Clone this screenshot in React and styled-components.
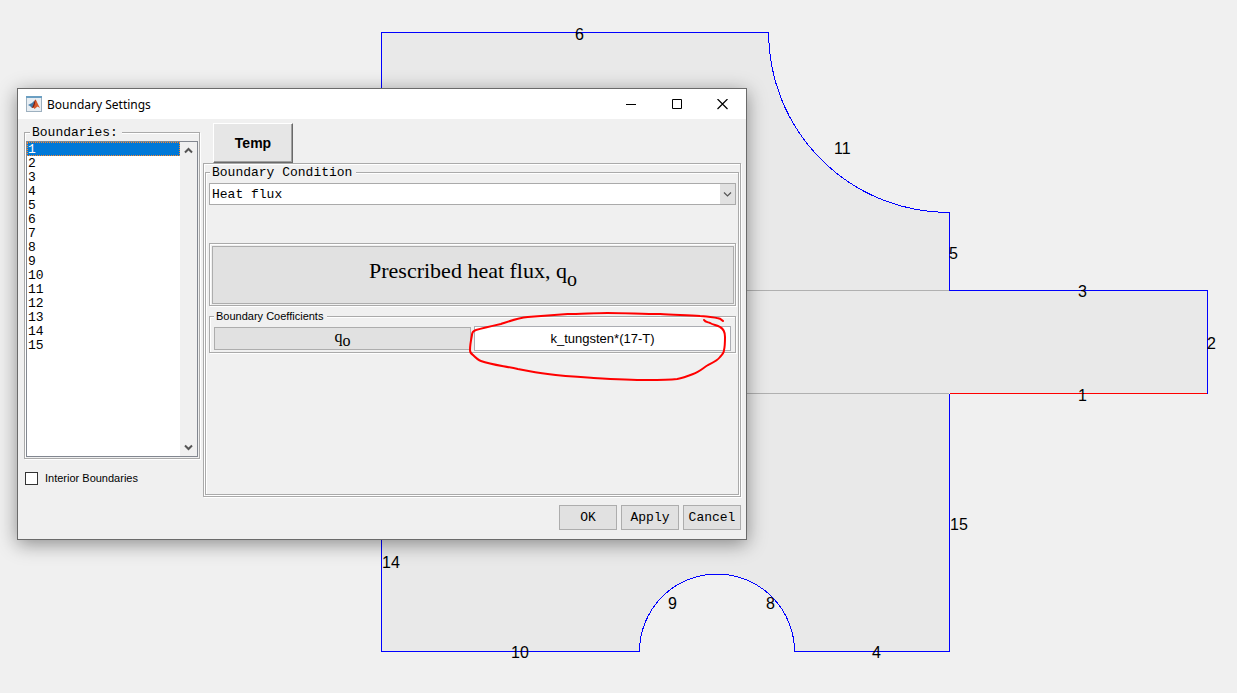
import React from "react";
import { useState } from "react";
import styled, { createGlobalStyle } from "styled-components";


const GlobalStyle = createGlobalStyle`
    * {
        box-sizing: border-box;
    }

    body {
        margin: 0;
        background: #f0f0f0;
        color: #000;
        font-family: "Liberation Sans", Arial, sans-serif;
    }

    button, input, select {
        margin: 0;
        border-radius: 0;
        color: inherit;
    }
`;

const Desktop = styled.main`
    position: relative;
    min-height: 100vh;
    overflow: hidden;
`;

const Plot = styled.svg`
    display: block;
    width: 100%;
    height: auto;

    text {
        font: 16px "Liberation Sans", Arial, sans-serif;
    }
`;

const Dialog = styled.section`
    position: absolute;
    top: 88px;
    left: 17px;
    right: 490px;
    border: 1px solid #6a6a6a;
    background: #f0f0f0;
    box-shadow: 0 4px 18px rgba(0, 0, 0, 0.42);
`;

const TitleBar = styled.header`
    display: flex;
    align-items: center;
    height: 30px;
    padding-left: 8px;
    background: #fff;
`;

const Title = styled.h1`
    flex: 1;
    margin: 0 0 0 5px;
    font: 12px "Noto Sans", "Open Sans", sans-serif;
`;

const WindowButton = styled.button`
    display: flex;
    align-items: center;
    justify-content: center;
    width: 46px;
    height: 28px;
    padding: 0;
    border: 0;
    background: none;
`;

const Body = styled.div`
    display: flex;
    gap: 3px;
    padding: 4px 5px 9px 6px;
`;

const LeftColumn = styled.div`
    flex: none;
    width: 176px;
    padding-top: 2px;
`;

const RightColumn = styled.div`
    flex: 1;
    min-width: 0;
`;

const Group = styled.fieldset`
    min-width: 0;
    margin: 0;
    padding: ${(props) => props.$pad};
    border: 1px solid #aaa;
    box-shadow: inset 1px 1px #fff, 1px 1px #fff;
`;

const ConditionGroup = styled(Group)`
    min-height: 330px;
`;

const CoefficientGroup = styled(Group)`
    margin-top: 4px;
`;

const Legend = styled.legend`
    margin-left: ${(props) => props.$indent || "0"};
    padding: 0 4px 0 2px;
    background: #f0f0f0;
    font: 13px/15px "Liberation Mono", "Courier New", monospace;
`;

const SmallLegend = styled(Legend)`
    font: 11px/13px "Liberation Sans", Arial, sans-serif;
`;

const Frame = styled.div`
    border: 1px solid #aaa;
    box-shadow: inset 1px 1px #fff, 1px 1px #fff;
`;

const Panel = styled(Frame)`
    padding: 1px;
`;

const ListFrame = styled.div`
    display: flex;
    height: 316px;
    border: 1px solid #828790;
    background: #fff;
`;

const List = styled.select`
    flex: 1;
    min-width: 0;
    padding: 0;
    border: 0;
    outline: 0;
    background: #fff;
    overflow: hidden;
    font: 13px/14px "Liberation Mono", "Courier New", monospace;

    option {
        min-height: 14px;
        height: 14px;
        padding: 0 1px;
    }

    option:checked {
        background: #0078d7 linear-gradient(#0078d7, #0078d7);
        color: #fff;
        outline: 1px dotted #ff8728;
        outline-offset: -1px;
    }
`;

const ScrollBar = styled.div`
    display: flex;
    flex-direction: column;
    justify-content: space-between;
    width: 17px;
    background: #f0f0f0;
`;

const ScrollButton = styled.button`
    display: flex;
    align-items: center;
    justify-content: center;
    width: 17px;
    height: 17px;
    padding: 0;
    border: 0;
    background: none;
`;

const CheckLabel = styled.label`
    display: flex;
    align-items: center;
    gap: 7px;
    margin: 13px 0 0 1px;
    font-size: 11px;
    line-height: 13px;
`;

const Check = styled.input`
    appearance: none;
    width: 13px;
    height: 13px;
    border: 1px solid #333;
    background: ${(props) => (props.checked ? "#333" : "#fff")};
`;

const Tab = styled.button`
    display: block;
    width: 80px;
    height: 40px;
    margin-left: 10px;
    border: 1px solid;
    border-color: #fff #696969 #696969 #fff;
    box-shadow: inset -1px -1px #a0a0a0;
    background: #e6e6e6;
    font: bold 14px "Liberation Sans", Arial, sans-serif;
`;

const DropDown = styled.div`
    display: grid;
    grid-template-columns: 1fr 16px;
    height: 22px;
    border: 1px solid #aaa;
    background: #fff;

    select {
        grid-area: 1 / 1 / 2 / 3;
        appearance: none;
        width: 100%;
        padding: 0 2px;
        border: 0;
        background: linear-gradient(to left, #e1e1e1 15px, #fff 15px);
        font: 13px "Liberation Mono", "Courier New", monospace;
    }

    svg {
        grid-area: 1 / 2;
        place-self: center;
        pointer-events: none;
    }
`;

const EquationFrame = styled(Frame)`
    margin-top: 38px;
    padding: 2px 1px 1px 2px;
`;

const Button = styled.button`
    padding: 0;
    border: 1px solid #adadad;
    background: #e1e1e1;
    font: 13px "Liberation Mono", "Courier New", monospace;
`;

const EquationButton = styled(Button)`
    display: block;
    width: 100%;
    height: 58px;
    padding-bottom: 8px;
    font: 22px/24px "Liberation Serif", "Times New Roman", serif;

    sub {
        font-size: 20px;
        line-height: 0;
        vertical-align: -8px;
    }
`;

const CoefficientRow = styled.div`
    display: grid;
    grid-template-columns: 1fr 1fr;
    align-items: center;
    gap: 3px;
`;

const CoefficientButton = styled(Button)`
    height: 23px;
    padding-bottom: 4px;
    font: 16px/18px "Liberation Serif", "Times New Roman", serif;

    sub {
        font-size: 16px;
        line-height: 0;
        vertical-align: -4px;
    }
`;

const Cell = styled.div`
    position: relative;
    display: flex;
`;

const ValueInput = styled.input`
    width: 100%;
    height: 25px;
    padding: 0;
    border: 1px solid #abadb3;
    background: #fff;
    font: 13px "Liberation Sans", Arial, sans-serif;
    text-align: center;
`;

// hand drawn ring that lies over the value cell
const Ring = styled.svg`
    position: absolute;
    top: -14px;
    left: -5px;
    width: 100%;
    height: 70px;
    overflow: visible;
    pointer-events: none;
`;

const Footer = styled.footer`
    display: flex;
    justify-content: flex-end;
    gap: 4px;
    margin-top: 8px;

    button {
        width: 58px;
        height: 25px;
    }
`;

const boundaries = Array.from({ length: 15 }, (_, i) => String(i + 1));

const labels = [
    { name: "6", x: 575, y: 40 },
    { name: "11", x: 834, y: 154 },
    { name: "5", x: 949, y: 259 },
    { name: "3", x: 1078, y: 297 },
    { name: "2", x: 1207, y: 349 },
    { name: "1", x: 1078, y: 401 },
    { name: "15", x: 950, y: 530 },
    { name: "14", x: 382, y: 568 },
    { name: "9", x: 668, y: 609 },
    { name: "8", x: 766, y: 609 },
    { name: "10", x: 511, y: 658 },
    { name: "4", x: 872, y: 658 },
];

// starts and ends at the selected boundary, which is drawn on its own
const outline =
    "M949.5 393.5V651.5H794.5A77.5 77.5 0 0 0 639.5 651.5H381.5V32.5H768.5A180.5 180.5 0 0 0 949.5 212.5V290.5H1207.5V393.5";

const Geometry = () => (
    <Plot viewBox="0 0 1237 693" role="img" aria-label="Geometry">
        <path d={outline} fill="#e9e9e9" />
        <path d="M381 290.5H949M381 393.5H949" stroke="#b0b0b0" fill="none" shapeRendering="crispEdges" />
        <path d={outline} stroke="#00f" fill="none" shapeRendering="crispEdges" />
        <path d="M950 393.5H1207" stroke="#f00" fill="none" shapeRendering="crispEdges" />
        {labels.map((label) => (
            <text key={label.name} x={label.x} y={label.y}>{label.name}</text>
        ))}
    </Plot>
);

const Logo = () => (
    <svg width="16" height="16" viewBox="0 0 16 16" aria-hidden="true">
        <rect x="0.5" y="0.5" width="15" height="15" fill="#e8eef3" stroke="#9db0bf" />
        <path d="M0 0H16V2H0Z" fill="#6b9fc2" />
        <path d="M2 9L6 7L8 5L9 8L6 12L4 10Z" fill="#3f79a8" />
        <path d="M6 12C8 10 8 4 9.500 3.500C11 5 12 9 14 12L11.500 10.500L8.500 13L7.500 11.500Z" fill="#d8592a" />
        <path d="M9.500 3.500C9 7 9 10 7 12L6 11.500C8 9 8 5 9.500 3.500Z" fill="#752015" />
    </svg>
);

const Chevron = ({ up, bold }) => (
    <svg width="9" height="7" viewBox="0 0 9 7" aria-hidden="true">
        <path
            d={up ? "M1 5.500L4.500 2L8 5.500" : "M1 1.500L4.500 5L8 1.500"}
            stroke="#555"
            strokeWidth={bold ? 2 : 1.2}
            fill="none"
        />
    </svg>
);

const App = () => {
    const [boundary, setBoundary] = useState("1");
    const [interior, setInterior] = useState(false);
    const [value, setValue] = useState("k_tungsten*(17-T)");

    return (
        <Desktop>
            <GlobalStyle />
            <Geometry />

            <Dialog aria-label="Boundary Settings">
                <TitleBar>
                    <Logo />
                    <Title>Boundary Settings</Title>
                    <WindowButton aria-label="Minimize">
                        <svg width="12" height="11" viewBox="0 0 12 11">
                            <path d="M1 5.500H11" stroke="#000" />
                        </svg>
                    </WindowButton>
                    <WindowButton aria-label="Maximize">
                        <svg width="12" height="11" viewBox="0 0 12 11">
                            <path d="M1.500 0.500H10.500V9.500H1.500Z" stroke="#000" fill="none" />
                        </svg>
                    </WindowButton>
                    <WindowButton aria-label="Close">
                        <svg width="12" height="11" viewBox="0 0 12 11">
                            <path d="M0.500 0L10.500 10M10.500 0L0.500 10" stroke="#000" strokeWidth="1.2" />
                        </svg>
                    </WindowButton>
                </TitleBar>

                <Body>
                    <LeftColumn>
                        <Group $pad="1px">
                            <Legend $indent="4px">Boundaries:</Legend>
                            <ListFrame>
                                <List
                                    size={15}
                                    aria-label="Boundaries"
                                    value={boundary}
                                    onChange={(e) => setBoundary(e.target.value)}
                                >
                                    {boundaries.map((item) => (
                                        <option key={item} value={item}>{item}</option>
                                    ))}
                                </List>
                                <ScrollBar>
                                    <ScrollButton aria-label="Scroll up"><Chevron up bold /></ScrollButton>
                                    <ScrollButton aria-label="Scroll down"><Chevron bold /></ScrollButton>
                                </ScrollBar>
                            </ListFrame>
                        </Group>
                        <CheckLabel>
                            <Check
                                type="checkbox"
                                checked={interior}
                                onChange={(e) => setInterior(e.target.checked)}
                            />
                            Interior Boundaries
                        </CheckLabel>
                    </LeftColumn>

                    <RightColumn>
                        <Tab>Temp</Tab>
                        <Panel>
                            <ConditionGroup $pad="3px 2px 3px 3px">
                                <Legend $indent="1px">Boundary Condition</Legend>
                                <DropDown>
                                    <select aria-label="Boundary Condition" defaultValue="Heat flux">
                                        <option>Heat flux</option>
                                    </select>
                                    <Chevron />
                                </DropDown>

                                <EquationFrame>
                                    <EquationButton>
                                        Prescribed heat flux, q<sub>o</sub>
                                    </EquationButton>
                                </EquationFrame>

                                <CoefficientGroup $pad="3px 4px 1px 4px">
                                    <SmallLegend>Boundary Coefficients</SmallLegend>
                                    <CoefficientRow>
                                        <CoefficientButton>q<sub>o</sub></CoefficientButton>
                                        <Cell>
                                            <ValueInput
                                                aria-label="Boundary coefficient"
                                                value={value}
                                                onChange={(e) => setValue(e.target.value)}
                                            />
                                            <Ring viewBox="468 312 258 70" preserveAspectRatio="none">
                                                <path
                                                    d="M723 321C721 319 719 318 717 318C711 317 706 316 700 316C687 315 673 315 660 314C642 314 625 313 607 313C594 313 580 314 567 314C553 315 540 316 527 317C517 318 509 321 500 324C491 326 482 328 475 330C472 331 471 333 471 335C470 340 469 346 469 350C469 352 470 354 472 355C474 357 477 360 480 361C491 365 504 366 517 369C527 371 537 373 547 374C562 376 578 377 593 378C611 379 629 380 647 380C657 380 668 380 677 379C683 378 688 376 693 374C699 372 703 368 708 365C712 363 717 361 720 357C722 355 724 353 724 350C725 346 725 341 725 337C725 333 724 329 720 327C717 325 713 325 710 323C707 322 705 322 704 320"
                                                    stroke="#f00"
                                                    strokeWidth="2"
                                                    strokeLinecap="round"
                                                    fill="none"
                                                    vectorEffect="non-scaling-stroke"
                                                />
                                            </Ring>
                                        </Cell>
                                    </CoefficientRow>
                                </CoefficientGroup>
                            </ConditionGroup>
                        </Panel>
                        <Footer>
                            <Button>OK</Button>
                            <Button>Apply</Button>
                            <Button>Cancel</Button>
                        </Footer>
                    </RightColumn>
                </Body>
            </Dialog>
        </Desktop>
    );
};

export default App;
